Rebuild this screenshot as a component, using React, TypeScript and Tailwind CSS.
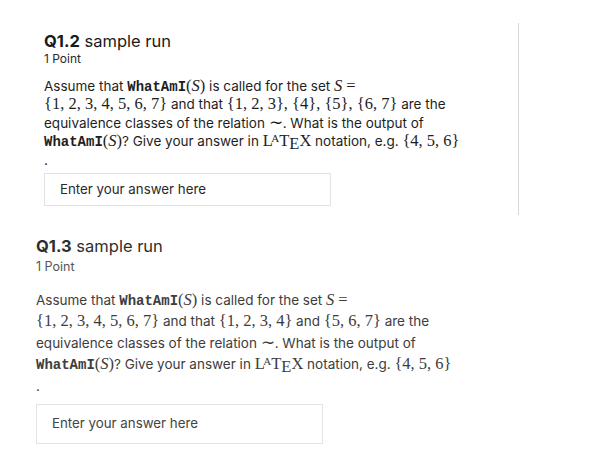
import React from "react";

const SANS = "font-['Inter','Open_Sans',sans-serif]";

function M({ children }: { children: React.ReactNode }) {
  return <span className="font-['Liberation_Serif',serif] text-[16.5px] leading-[0px]">{children}</span>;
}
function I({ children }: { children: React.ReactNode }) {
  return <span className="font-['Liberation_Serif',serif] italic text-[16.5px] leading-[0px]">{children}</span>;
}
function TT() {
  return (
    <>
      <span className="font-['Liberation_Mono',monospace] font-bold text-[14px] leading-[0px]">WhatAmI</span>
      <M>(</M>
      <I>S</I>
      <M>)</M>
    </>
  );
}
function Eq() {
  return (
    <>
      <I>S</I>
      <span className="font-['Liberation_Serif',serif] text-[16.5px] leading-[0px] ml-[4px]">=</span>
    </>
  );
}
function LaTeX() {
  return (
    <span className="font-['Liberation_Serif',serif] text-[16.5px] leading-[0px]">
      <span>L</span>
      <span className="text-[11px] ml-[-1.5px] relative top-[-4px]">A</span>
      <span>T</span>
      <span className="relative top-[3px]">E</span>
      <span>X</span>
    </span>
  );
}

export default function App() {
  return (
    <div className={`w-[599px] h-[450px] bg-white overflow-hidden ${SANS}`}>
      {/* Q1.2 */}
      <div className="ml-[24px] mt-[23px] w-[495px] h-[192px] border-r-[1.5px] border-[#d6d6d6] pl-[20px] pt-[8px] text-[#222]">
        <div className="text-[16.5px] leading-[20px] text-[#1a1a1a]">
          <span className="font-bold">Q1.2</span> sample run
        </div>
        <div className="text-[12px] leading-[16px] text-[#2a2a2a]">1 Point</div>
        <div className="mt-[10px] text-[13.5px] leading-[18.4px] text-[#1e1e1e]">
          <div className="whitespace-nowrap">
            Assume that <TT /> is called for the set <Eq />
          </div>
          <div className="whitespace-nowrap">
            <M>{"{1, 2, 3, 4, 5, 6, 7}"}</M> and that <M>{"{1, 2, 3}, {4}, {5}, {6, 7}"}</M> are the
          </div>
          <div className="whitespace-nowrap">
            equivalence classes of the relation <M>∼</M>. What is the output of
          </div>
          <div className="whitespace-nowrap">
            <TT />? Give your answer in <LaTeX /> notation, e.g. <M>{"{4, 5, 6}"}</M>
          </div>
          <div>.</div>
        </div>
        <div className="mt-[4px] w-[287px] h-[33px] border border-[#e2e2e2] flex items-center pl-[15px] text-[13.3px] text-[#2a2a2a]">
          Enter your answer here
        </div>
      </div>

      {/* Q1.3 */}
      <div className="pl-[36px] pt-[20px] text-[#3a3a3a]">
        <div className="text-[16.5px] leading-[22px] text-[#2e2e2e]">
          <span className="font-bold">Q1.3</span> sample run
        </div>
        <div className="mt-[1px] text-[12.5px] leading-[18px] text-[#555]">1 Point</div>
        <div className="mt-[14px] text-[13.5px] leading-[21.4px] text-[#3d3d3d]">
          <div className="whitespace-nowrap">
            Assume that <TT /> is called for the set <Eq />
          </div>
          <div className="whitespace-nowrap">
            <M>{"{1, 2, 3, 4, 5, 6, 7}"}</M> and that <M>{"{1, 2, 3, 4}"}</M> and <M>{"{5, 6, 7}"}</M> are the
          </div>
          <div className="whitespace-nowrap">
            equivalence classes of the relation <M>∼</M>. What is the output of
          </div>
          <div className="whitespace-nowrap">
            <TT />? Give your answer in <LaTeX /> notation, e.g. <M>{"{4, 5, 6}"}</M>
          </div>
          <div>.</div>
        </div>
        <div className="mt-[7px] w-[287px] h-[40px] border border-[#e4e4e4] flex items-center pl-[15px] text-[13.3px] text-[#444]">
          Enter your answer here
        </div>
      </div>
    </div>
  );
}
